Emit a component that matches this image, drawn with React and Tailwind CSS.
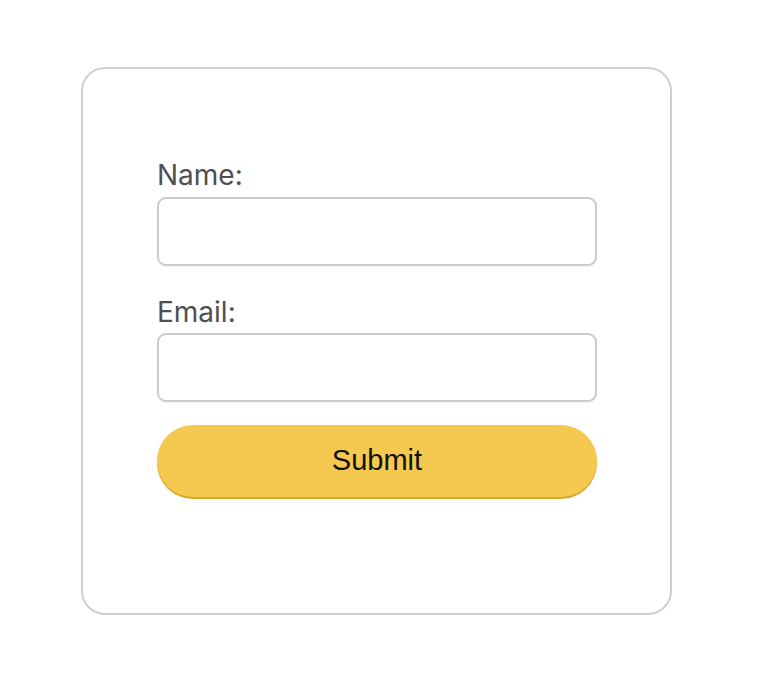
export default function App() {
  return (
    <div className="min-h-[695px] bg-white pt-[67px] pl-[81px]" style={{ fontFamily: 'Inter, "Noto Sans", sans-serif' }}>
      <div className="w-[591px] h-[548px] rounded-[24px] border-2 border-[#cfcfcf] bg-white pt-[90px] pl-[74px]">
        <form className="w-[440px]" onSubmit={e => e.preventDefault()}>
          <label className="block text-[28px] leading-[32px] text-[#4f4f4f] mb-[6px]">Name:</label>
          <input type="text" className="block w-full h-[69px] rounded-[9px] border-2 border-[#cbcbcb] bg-white shadow-[0_1px_2px_rgba(0,0,0,0.06)] outline-none" />
          <label className="block text-[28px] leading-[32px] text-[#4f4f4f] mt-[30px] mb-[5px]">Email:</label>
          <input type="email" className="block w-full h-[69px] rounded-[9px] border-2 border-[#cbcbcb] bg-white shadow-[0_1px_2px_rgba(0,0,0,0.06)] outline-none" />
          <button
            type="submit"
            className="mt-[23px] w-full h-[72px] rounded-full bg-[#f5c84f] shadow-[0_2px_0_#d9a62e] text-[29px] text-[#111]"
            style={{ fontFamily: '"Liberation Sans", Arial, sans-serif' }}
          >
            Submit
          </button>
        </form>
      </div>
    </div>
  )
}
